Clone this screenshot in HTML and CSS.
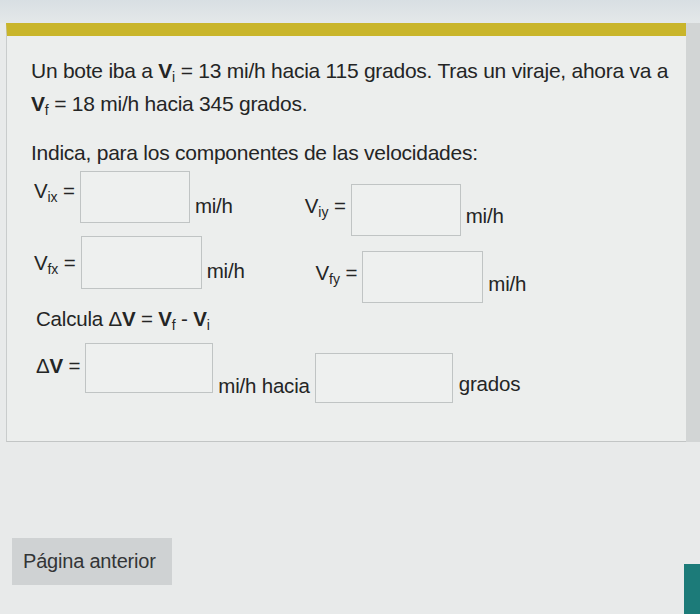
FILE: index.html
```html
<!DOCTYPE html>
<html lang="es">
<head>
<meta charset="utf-8">
<title>Velocidades</title>
<link rel="stylesheet" href="styles.css">
</head>
<body>
<div class="top-strip"></div>
<div class="main">
  <section class="card">
    <p class="statement">Un bote iba a <b>V</b><sub>i</sub> = 13 mi/h hacia 115 grados. Tras un viraje, ahora va a<br><b>V</b><sub>f</sub> = 18 mi/h hacia 345 grados.</p>
    <p class="prompt">Indica, para los componentes de las velocidades:</p>

    <div class="row row-1">
      <div class="group g-ix">
        <span class="label">V<sub>ix</sub> =</span>
        <span class="box"></span>
        <span class="unit">mi/h</span>
      </div>
      <div class="group g-iy">
        <span class="label">V<sub>iy</sub> =</span>
        <span class="box"></span>
        <span class="unit">mi/h</span>
      </div>
    </div>

    <div class="row row-2">
      <div class="group g-fx">
        <span class="label">V<sub>fx</sub> =</span>
        <span class="box wide"></span>
        <span class="unit">mi/h</span>
      </div>
      <div class="group g-fy">
        <span class="label">V<sub>fy</sub> =</span>
        <span class="box wide"></span>
        <span class="unit">mi/h</span>
      </div>
    </div>

    <p class="calc">Calcula &Delta;<b>V</b> = <b>V</b><sub>f</sub> - <b>V</b><sub>i</sub></p>

    <div class="row row-3">
      <div class="group g-dv">
        <span class="label">&Delta;<b>V</b> =</span>
        <span class="box dv"></span>
        <span class="unit">mi/h hacia</span>
        <span class="box deg"></span>
        <span class="unit unit-deg">grados</span>
      </div>
    </div>
  </section>
  <div class="gutter"></div>
</div>

<div class="nav">
  <button class="btn-prev" type="button">Página anterior</button>
  <button class="btn-next" type="button" aria-label="Página siguiente"></button>
</div>
</body>
</html>
```

FILE: styles.css
```css
html, body {
  margin: 0;
  padding: 0;
}
body {
  width: 700px;
  height: 614px;
  overflow: hidden;
  background: #e8eaea;
  font-family: "Liberation Sans", Arial, sans-serif;
  color: #242525;
}
.top-strip {
  height: 23px;
  background: linear-gradient(#d8dfe3, #e4e8e9);
}
.main {
  display: flex;
  align-items: stretch;
}
.card {
  width: 680px;
  margin-left: 6px;
  box-sizing: border-box;
  background: #eceeed;
  border-top: 13px solid #c9b52b;
  border-left: 1px solid #c9cccc;
  border-bottom: 1px solid #c2c5c5;
  padding: 18px 0 38px 24px;
}
.gutter {
  flex: 1;
  background: #d2d5d5;
}
.statement {
  margin: 0;
  font-size: 21px;
  line-height: 33px;
  letter-spacing: -0.25px;
  white-space: nowrap;
}
.prompt {
  margin: 16px 0 0;
  font-size: 21px;
  line-height: 33px;
  letter-spacing: -0.25px;
}
sub {
  font-size: 14px;
  vertical-align: -4px;
  line-height: 0;
  letter-spacing: 0;
}
.row {
  display: flex;
  align-items: flex-start;
  margin-left: 3px;
}
.row-1 { margin-top: 2px; }
.row-2 { margin-top: 0; }
.row-3 { margin-top: 12px; margin-left: 5px; }
.group {
  display: flex;
  align-items: flex-start;
}
.label, .unit {
  font-size: 20.5px;
  line-height: 24px;
  letter-spacing: -0.2px;
  white-space: nowrap;
}
.label { margin-right: 5px; }
.unit { align-self: flex-end; margin-left: 5px; }
.box {
  display: block;
  flex-shrink: 0;
  width: 110px;
  height: 52px;
  box-sizing: border-box;
  border: 1px solid #c0c4c4;
  background: #eef0ef;
}
.box.wide { width: 121px; height: 53px; }
.box.dv { width: 128px; height: 50px; }
.box.deg { width: 138px; height: 50px; margin-top: 10px; margin-left: 5px; }

.g-ix .label { margin-top: 8px; }
.g-ix .unit { margin-bottom: 5px; }
.g-iy { margin-left: 72px; margin-top: 13px; }
.g-iy .label { margin-top: 10px; }
.g-iy .unit { margin-bottom: 8px; }

.g-fx .label { margin-top: 15px; }
.g-fx .unit { margin-bottom: 6px; }
.g-fy { margin-left: 71px; margin-top: 15px; }
.g-fy .box { height: 52px; }
.g-fy .label { margin-top: 10px; }
.g-fy .unit { margin-bottom: 7px; }

.calc {
  margin: 4px 0 0 5px;
  font-size: 20.5px;
  line-height: 24px;
  letter-spacing: -0.2px;
}
.g-dv .label { margin-top: 11px; }
.g-dv .unit { margin-bottom: 5px; }
.g-dv .unit-deg { margin-bottom: 7px; margin-left: 6px; }

.nav {
  display: flex;
  align-items: flex-start;
  margin-top: 96px;
  padding-left: 12px;
}
.btn-prev {
  flex-shrink: 0;
  width: 160px;
  height: 47px;
  border: 0;
  border-radius: 0;
  background: #cfd2d3;
  color: #333536;
  font-family: "Liberation Sans", Arial, sans-serif;
  font-size: 20px;
  letter-spacing: -0.2px;
  white-space: nowrap;
  text-align: left;
  padding: 0 0 0 11px;
}
.btn-next {
  flex-shrink: 0;
  margin-left: 512px;
  margin-top: 26px;
  width: 16px;
  height: 50px;
  border: 0;
  border-radius: 0;
  background: #1c7b79;
  padding: 0;
}
```
